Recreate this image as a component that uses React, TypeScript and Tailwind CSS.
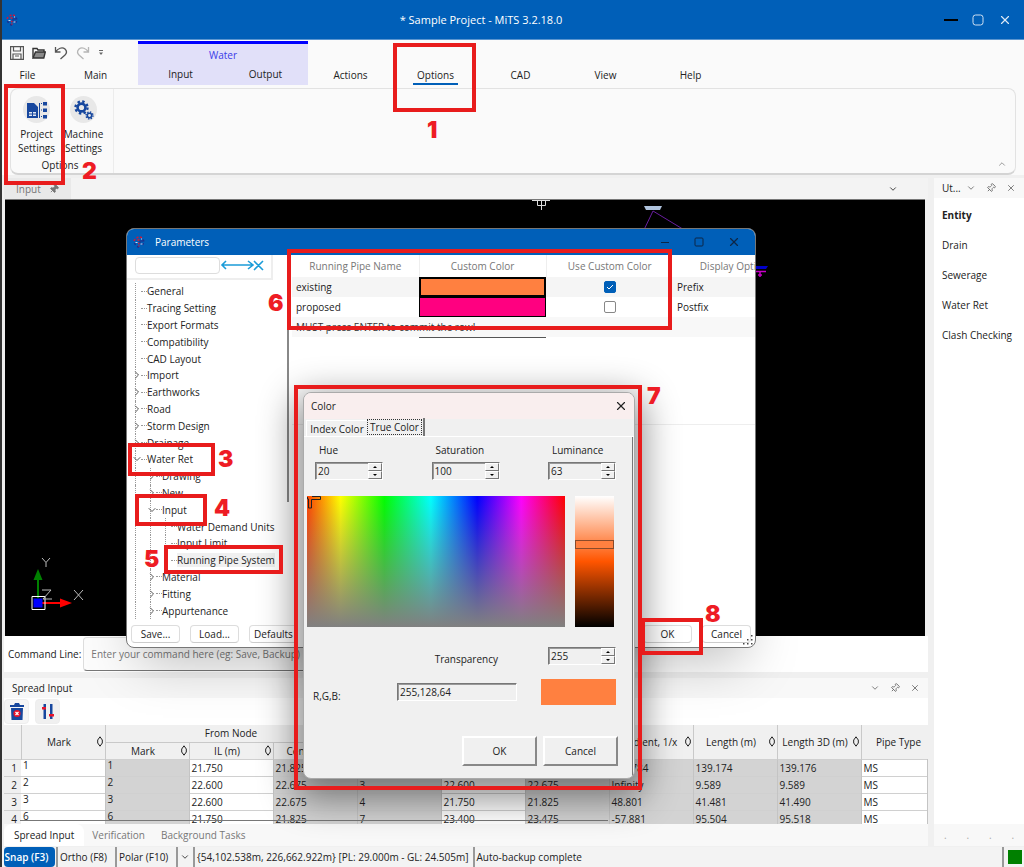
import { useState } from "react";
import { ChevronDown, ChevronRight, ChevronUp, Pin, X } from "lucide-react";
import clsx from "clsx";

const ribbonTabs = ["Actions", "Options", "CAD", "View", "Help"];

const treeItems = [
  { label: "General", depth: 0 },
  { label: "Tracing Setting", depth: 0 },
  { label: "Export Formats", depth: 0 },
  { label: "Compatibility", depth: 0 },
  { label: "CAD Layout", depth: 0 },
  { label: "Import", depth: 0, node: "closed" },
  { label: "Earthworks", depth: 0, node: "closed" },
  { label: "Road", depth: 0, node: "closed" },
  { label: "Storm Design", depth: 0, node: "closed" },
  { label: "Drainage", depth: 0, node: "closed" },
  { label: "Water Ret", depth: 0, node: "open" },
  { label: "Drawing", depth: 1, node: "closed" },
  { label: "New", depth: 1, node: "closed" },
  { label: "Input", depth: 1, node: "open" },
  { label: "Water Demand Units", depth: 2 },
  { label: "Input Limit", depth: 2 },
  { label: "Running Pipe System", depth: 2, selected: true },
  { label: "Material", depth: 1, node: "closed" },
  { label: "Fitting", depth: 1, node: "closed" },
  { label: "Appurtenance", depth: 1, node: "closed" },
];

const pipeRows = [
  ["1", "1", "21.750", "21.825", "2", "22.600", "22.675", "163.784", "139.174", "139.176", "MS"],
  ["2", "2", "22.600", "22.675", "3", "22.600", "22.675", "Infinity", "9.589", "9.589", "MS"],
  ["3", "3", "22.600", "22.675", "4", "21.750", "21.825", "48.801", "41.481", "41.490", "MS"],
  ["6", "6", "21.750", "21.825", "7", "23.400", "23.475", "-57.881", "95.504", "95.518", "MS"],
];
const editable = [0, 2, 5, 10];

const callouts = [
  { n: 1, box: "left-[393px] top-[43px] w-[83px] h-[69px]", num: "left-[427px] top-[119px]" },
  { n: 2, box: "left-[4px] top-[84px] w-[61px] h-[101px]", num: "left-[82px] top-[160px]" },
  { n: 3, box: "left-[128px] top-[443px] w-[87px] h-[33px]", num: "left-[218px] top-[448px]" },
  { n: 4, box: "left-[135px] top-[494px] w-[72px] h-[32px]", num: "left-[214px] top-[497px]" },
  { n: 5, box: "left-[164px] top-[545px] w-[119px] h-[29px]", num: "left-[144px] top-[548px]" },
  { n: 6, box: "left-[287px] top-[249px] w-[385px] h-[81px]", num: "left-[268px] top-[292px]" },
  { n: 7, box: "left-[294px] top-[385px] w-[348px] h-[405px]", num: "left-[647px] top-[385px]" },
  { n: 8, box: "left-[641px] top-[618px] w-[62px] h-[37px]", num: "left-[705px] top-[603px]" },
];

function AppLogo() {
  return (
    <svg viewBox="0 0 12 12" className="size-3" fill="none">
      <path d="M1 5l1-2M3.500 2l2-1M7 1l2 .800" stroke="#c8193c" strokeWidth="1.600" />
      <path d="M10 3.500l1 2M10.500 7l-1 2M1.500 7l1 2M4 10.500l2 .800" stroke="#1c2f8f" strokeWidth="1.500" />
      <path d="M7 4v4M9 4v2" stroke="#1c2f8f" strokeWidth="1.200" />
      <path d="M2.500 6.500h2M7.500 8h2M8 3h1" stroke="#c9d8f2" />
      <path d="M4.500 4h2M5 7.500h1.500M5.500 10h1" stroke="#e21b2c" strokeWidth="1.500" />
    </svg>
  );
}

function ProjectIcon() {
  return (
    <svg viewBox="0 0 20 18" className="h-[18px] w-5" fill="#17479e">
      <path d="M0 2h7l4 4v11H0z" />
      <path d="M2 11h3v1.500H2zM6 11h3v1.500H6zM2 13.500h3V15H2zM6 13.500h3V15H6z" fill="#dfe6f2" />
      <path d="M12 2h1v15h-1z" />
      <path d="M16 1h4v3.500h-4zM16 7.500h4V11h-4zM16 14h4v3.500h-4zM14 2h1v1h-1zM14 8.500h1v1h-1zM14 15h1v1h-1z" />
    </svg>
  );
}

function GearsIcon() {
  return (
    <svg viewBox="0 0 20 20" className="size-5" fill="none" stroke="#17479e">
      <circle cx="7.500" cy="7.500" r="3.900" strokeWidth="2.600" />
      <circle cx="7.500" cy="7.500" r="6" strokeWidth="2.400" strokeDasharray="2.4 2.312" />
      <circle cx="15.500" cy="15.500" r="2.200" strokeWidth="1.600" />
      <circle cx="15.500" cy="15.500" r="3.500" strokeWidth="1.400" strokeDasharray="1.4 1.349" />
    </svg>
  );
}

function QuickAccess() {
  return (
    <div className="flex h-[22px] items-center gap-2 pl-2 pt-1 text-[#444]">
      <button aria-label="Save">
        <svg viewBox="0 0 14 14" className="size-3.5" fill="none" stroke="#555" strokeWidth="1.200">
          <path d="M.6.600h12.800v12.800H.6zM3.500.600v4.400h7V.600M3 13.400V8h8v5.400M5 10h4" />
        </svg>
      </button>
      <button aria-label="Open">
        <svg viewBox="0 0 14 12" className="h-3 w-3.5" fill="none" stroke="#333" strokeWidth="1.400">
          <path d="M1 10.500V1.500h4l1 1.500h6v2" />
          <path d="M1 11l2.500-6H13.300l-1.500 6z" fill="#8a8a8a" />
        </svg>
      </button>
      <button aria-label="Undo">
        <svg viewBox="0 0 14 14" className="size-3.5" fill="none" stroke="#555" strokeWidth="1.300">
          <path d="M1.500 1v5h5M1.500 6C4 2.500 8 .500 11 3c2.500 2.500 1.500 4.500 0 6L6.500 13" />
        </svg>
      </button>
      <button aria-label="Redo">
        <svg viewBox="0 0 14 14" className="size-3.5" fill="none" stroke="#b5b5b5" strokeWidth="1.300">
          <path d="M12.500 1v5h-5M12.500 6C10 2.500 6 .500 3 3C.500 5.500 1.500 7.500 3 9l4.500 4" />
        </svg>
      </button>
      <button aria-label="Customize">
        <svg viewBox="0 0 6 6" className="size-1.5" fill="#666">
          <path d="M1 0h4v1H1zM1 2.500h4L3 5z" />
        </svg>
      </button>
    </div>
  );
}

function Ribbon() {
  return (
    <section className="mx-2 flex h-[87px] rounded-lg border border-b-2 border-[#e2e2e2] border-b-[#d4d4d4] bg-[#fafafa]">
      <div className="flex flex-col border-r border-[#ececec] pl-0.5 pr-1.5">
        <div className="flex leading-[14px]">
          <button className="flex w-[47px] flex-col items-center pt-[7px]">
            <span className="mb-1 flex size-[27px] items-center justify-center rounded-full bg-[#e8e8e8]">
              <ProjectIcon />
            </span>
            Project
            <br />
            Settings
          </button>
          <button className="flex w-[47px] flex-col items-center pt-[7px]">
            <span className="mb-1 flex size-[27px] items-center justify-center rounded-full bg-[#e8e8e8]">
              <GearsIcon />
            </span>
            Machine
            <br />
            Settings
          </button>
        </div>
        <span className="pt-[3px] text-center leading-[14px]">Options</span>
      </div>
      <button aria-label="Collapse ribbon" className="mb-1 ml-auto mr-2 self-end text-[#888]">
        <ChevronUp className="size-2.5" />
      </button>
    </section>
  );
}

function PanelControls() {
  return (
    <div className="flex items-center gap-2.5 text-[#666]">
      <ChevronDown className="size-2.5" />
      <Pin className="size-2.5 rotate-45" />
      <X className="size-2.5" />
    </div>
  );
}

function Drawing() {
  return (
    <div className="relative ml-px mr-[3px] min-h-96 flex-1 overflow-hidden border-t border-[#777] bg-black">
      <svg viewBox="0 0 28 12" className="absolute left-[522px] top-0 h-3 w-7" fill="none" stroke="#ddd">
        <path d="M5 .500h18M14.500 0v10M10.500 1v4.500h8V1" />
      </svg>
      <svg viewBox="0 0 50 30" className="absolute left-[631px] top-1 h-[30px] w-[50px]" fill="none">
        <path d="M8 2h18l-2 4H10z" fill="#b0c4de" />
        <path d="M17 7L6 30M17 7L50 27" stroke="#6a1fa0" />
      </svg>
      <svg viewBox="0 0 14 14" className="absolute left-[749px] top-[65px] size-3.5" fill="none">
        <path d="M0 1h14l-2 3H0z" fill="#0000d0" />
        <path d="M2 6.500h10M6 7v5M4 10h4" stroke="#d000d0" strokeWidth="1.500" />
      </svg>
      <svg viewBox="0 0 60 60" className="absolute bottom-6 left-[22px] size-[60px]" fill="none">
        <path d="M11 46V20" stroke="#008000" strokeWidth="2" />
        <path d="M11 17l-4.500 11h9z" fill="#008000" />
        <path d="M13 51h22" stroke="#f00" strokeWidth="2" />
        <path d="M45 51l-12-4.500v9z" fill="#f00" />
        <path d="M5 44.500h13v13H5z" stroke="#fff" />
        <path d="M6.500 46.500h9v9h-9z" fill="#00f" />
        <path d="M15 6l4 4.500L23 6M19 10.500V15M15 38h9l-8 9h9M47 38l9 10M56 38l-9 10" stroke="#bbb" />
      </svg>
    </div>
  );
}

function Sorter() {
  return (
    <svg viewBox="0 0 6 11" className="h-[11px] w-1.5 shrink-0" fill="none" stroke="#222">
      <path d="M3 .800L5.300 4v3L3 10.200.700 7V4z" />
    </svg>
  );
}

function HeadCell({ label }: { label: string }) {
  return (
    <div className="flex items-center whitespace-nowrap pr-0.5">
      <span className="flex-1 text-center">{label}</span>
      <Sorter />
    </div>
  );
}

function SpreadInput() {
  const head = "border-r border-[#c9c9c9] p-0 font-normal";
  return (
    <section className="flex flex-col">
      <header className="flex h-5 items-center justify-between bg-[#f8f8f8] px-2">
        <h2>Spread Input</h2>
        <PanelControls />
      </header>
      <div className="flex h-[27px] items-center gap-1.5 bg-white">
        <button aria-label="Delete row" className="flex size-[25px] items-center justify-center rounded border border-[#eee] bg-[#f5f5f5]">
          <svg viewBox="0 0 14 17" className="h-[17px] w-3.5" fill="#17479e">
            <path d="M0 2h4l1-2h4l1 2h4v2H0zM1 5h12l-.500 12h-11z" />
            <circle cx="7" cy="10.500" r="3.600" fill="#e8132b" />
            <path d="M5.500 9l3 3M8.500 9l-3 3" stroke="#fff" strokeWidth="1.200" />
          </svg>
        </button>
        <button aria-label="Adjust" className="flex size-[25px] items-center justify-center rounded border border-[#eee] bg-[#f0f0f0]">
          <svg viewBox="0 0 12 15" className="h-[15px] w-3" fill="#17479e">
            <path d="M1.500 0h2.500v15H1.500zM8 0h2.500v15H8z" />
            <path d="M0 3h4v2.500H0zM7 10h5v2.500H7z" fill="#e8132b" />
          </svg>
        </button>
      </div>
      <div className="relative h-[99px] overflow-hidden">
        <table className="w-full table-fixed border-collapse">
          <colgroup>
            <col className="w-[17px]" />
            {pipeRows[0].slice(1).map((_, i) => (
              <col key={i} className="w-[84px]" />
            ))}
            <col />
          </colgroup>
          <thead className="bg-[#f0f0f0]">
            <tr className="h-[17px]">
              <th rowSpan={2} className={head} aria-label="Row" />
              <th rowSpan={2} className={head}><HeadCell label="Mark" /></th>
              <th colSpan={3} className={clsx(head, "border-b")}>From Node</th>
              <th colSpan={3} className={clsx(head, "border-b")}>To Node</th>
              <th rowSpan={2} className={head}><HeadCell label="Gradient, 1/x" /></th>
              <th rowSpan={2} className={head}><HeadCell label="Length (m)" /></th>
              <th rowSpan={2} className={head}><HeadCell label="Length 3D (m)" /></th>
              <th rowSpan={2} className="whitespace-nowrap p-0 pl-2 font-normal">Pipe Type</th>
            </tr>
            <tr className="h-[17px]">
              <th className={head}><HeadCell label="Mark" /></th>
              <th className={head}><HeadCell label="IL (m)" /></th>
              <th className={head}><HeadCell label="Center (m)" /></th>
              <th className={head}><HeadCell label="Mark" /></th>
              <th className={head}><HeadCell label="IL (m)" /></th>
              <th className={head}><HeadCell label="Center (m)" /></th>
            </tr>
          </thead>
          <tbody>
            {pipeRows.map((row, r) => (
              <tr key={r} className="h-[17px] border-y border-[#d0d0d0] leading-[10px]">
                <th className="bg-[#f0f0f0] p-0 pr-1 text-right font-normal">{r + 1}</th>
                {row.map((value, c) => (
                  <td
                    key={c}
                    className={clsx(
                      "border-r border-[#c4c4c4] p-0 pl-0.5",
                      editable.includes(c) ? "bg-white" : "bg-[#d3d3d3]",
                      c < 2 && "align-top"
                    )}
                  >
                    {value}
                  </td>
                ))}
              </tr>
            ))}
          </tbody>
        </table>
        <div className="absolute bottom-[3px] left-4 right-80 h-px bg-[#777]" />
      </div>
      <nav className="flex h-[22px] items-center bg-[#f8f8f8] text-[#777]">
        <button className="h-full rounded-t-lg bg-white px-2.5 text-[#222]">Spread Input</button>
        <button className="px-2">Verification</button>
        <button className="px-2">Background Tasks</button>
      </nav>
    </section>
  );
}

function UtilityPanel() {
  return (
    <aside className="flex w-[90px] shrink-0 flex-col bg-white">
      <header className="flex h-5 items-center justify-between bg-[#f8f8f8] px-2">
        <span>Ut...</span>
        <PanelControls />
      </header>
      <ul className="flex-1 pl-2 pt-0.5">
        {["Entity", "Drain", "Sewerage", "Water Ret", "Clash Checking"].map((item) => (
          <li key={item} className={clsx("flex h-[30px] items-center whitespace-nowrap", item === "Entity" && "font-bold")}>
            {item}
          </li>
        ))}
      </ul>
      <div className="flex h-[22px] items-center justify-around bg-[#f8f8f8] text-[#aaa]">
        <span>.</span>
        <span>.</span>
        <span>.</span>
        <span>.</span>
      </div>
    </aside>
  );
}

function ParameterTree() {
  return (
    <ul className="relative flex h-[336px] flex-col overflow-hidden">
      {treeItems.map((item) => (
        <li
          key={item.label}
          className={clsx(
            "relative flex flex-1 items-center whitespace-nowrap",
            item.depth === 0 && "pl-1",
            item.depth === 1 && "pl-[19px]",
            item.depth === 2 && "pl-[34px]"
          )}
        >
          <span className="absolute inset-y-0 left-2 border-l border-dotted border-[#999]" />
          {item.depth > 0 && <span className="absolute inset-y-0 left-[23px] border-l border-dotted border-[#999]" />}
          {item.depth > 1 && <span className="absolute inset-y-0 left-[38px] border-l border-dotted border-[#999]" />}
          <span className="relative w-2.5 shrink-0 text-[#555]">
            {item.node === "closed" && <ChevronRight className="size-3" />}
            {item.node === "open" && <ChevronDown className="size-3" />}
          </span>
          <span className="w-1.5 shrink-0 border-t border-dotted border-[#999]" />
          <span className={clsx(item.selected && "bg-[#f0f0f0]")}>{item.label}</span>
        </li>
      ))}
    </ul>
  );
}

function ParametersDialog() {
  const [custom, setCustom] = useState([true, false]);
  const button = "h-[18px] rounded border border-[#ddd] border-b-[#ccc] bg-white";
  const rows = [
    { name: "existing", swatch: "bg-[#ff8040] border-2", option: "Prefix" },
    { name: "proposed", swatch: "bg-[#ff0080] border", option: "Postfix" },
  ];

  return (
    <div role="dialog" aria-label="Parameters" className="absolute left-[124px] top-[228px] flex h-[420px] w-[630px] flex-col overflow-hidden rounded-lg border border-[#777] bg-white shadow-2xl">
      <header className="flex h-[26px] shrink-0 items-center bg-[#005fb8] pl-1.5 pr-3.5 text-white">
        <AppLogo />
        <h2 className="flex-1 pl-2.5">Parameters</h2>
        <div className="flex items-center gap-[22px] text-[#0d2747]">
          <svg viewBox="0 0 12 12" className="size-3" stroke="currentColor"><path d="M2 6.500h8" /></svg>
          <svg viewBox="0 0 12 12" className="size-3" stroke="currentColor" fill="none"><rect x="2" y="2" width="8" height="8" rx="1" /></svg>
          <X className="size-3.5" />
        </div>
      </header>
      <div className="flex min-h-0 flex-1">
        <div className="flex w-[162px] shrink-0 flex-col">
          <div className="flex h-[25px] w-[146px] items-start border-b-2 border-r-2 border-[#eee] pl-2 pt-0.5">
            <input aria-label="Search parameters" className="h-[17px] w-[85px] rounded border border-[#ddd] bg-white" />
            <svg viewBox="0 0 46 12" className="mt-0.5 h-3 w-[46px]" fill="none" stroke="#1b9cd8" strokeWidth="1.600">
              <path d="M2 6h31M6 2L2 6l4 4M28 2l5 4-5 4M34 2l9 9M43 2l-9 9" />
            </svg>
          </div>
          <div className="flex">
            <div className="flex-1 pt-[3px]"><ParameterTree /></div>
            <div className="mt-3 h-[210px] w-0.5 bg-[#888]" />
          </div>
        </div>
        <div className="min-w-0 flex-1 overflow-hidden pl-[3px]">
          <table className="w-[508px] table-fixed border-collapse">
            <thead className="text-[#777]">
              <tr className="h-[22px]">
                <th className="border-r border-[#eee] p-0 font-normal">Running Pipe Name</th>
                <th className="border-r border-[#eee] p-0 font-normal">Custom Color</th>
                <th className="p-0 font-normal">Use Custom Color</th>
                <th className="p-0 font-normal">Display Options</th>
              </tr>
            </thead>
            <tbody>
              {rows.map((row, i) => (
                <tr key={row.name} className={clsx("h-5", i === 0 && "bg-[#f5f5f5]")}>
                  <td className="p-0 pl-1">{row.name}</td>
                  <td className="p-0"><div className={clsx("h-5 border-black", row.swatch)} /></td>
                  <td className="p-0">
                    <label className="flex justify-center">
                      <input
                        type="checkbox"
                        aria-label={"Use custom color for " + row.name}
                        checked={custom[i]}
                        onChange={() => setCustom(custom.map((v, k) => (k === i ? !v : v)))}
                        className="peer sr-only"
                      />
                      <span className="flex size-3 items-center justify-center rounded-xs border border-[#888] bg-white peer-checked:border-[#005fb8] peer-checked:bg-[#005fb8]">
                        <svg viewBox="0 0 8 8" className="size-2" fill="none" stroke="#fff"><path d="M1 4l2 2 4-4" /></svg>
                      </span>
                    </label>
                  </td>
                  <td className="p-0 pl-1">{row.option}</td>
                </tr>
              ))}
              <tr className="h-5 bg-[#f8f8f8]">
                <td colSpan={4} className="p-0 pl-1 text-[#333]">MUST press ENTER to commit the row!</td>
              </tr>
            </tbody>
          </table>
          <div className="ml-[127px] h-px w-[127px] bg-[#555]" />
          <div className="mt-[86px] border-t border-[#eee]" />
        </div>
      </div>
      <footer className="flex h-[27px] shrink-0 items-center gap-2.5 px-1">
        <button className={clsx(button, "w-[49px]")}>Save...</button>
        <button className={clsx(button, "w-[49px]")}>Load...</button>
        <button className={clsx(button, "w-[49px]")}>Defaults</button>
        <button className={clsx(button, "ml-auto w-[49px]")}>OK</button>
        <button className={clsx(button, "w-[49px]")}>Cancel</button>
      </footer>
      <svg viewBox="0 0 10 10" className="absolute bottom-0.5 right-0.5 size-2.5" fill="#444">
        <path d="M8 0h1.500v1.500H8zM4 4h1.500v1.500H4zM8 4h1.500v1.500H8zM0 8h1.500v1.500H0zM4 8h1.500v1.500H4zM8 8h1.500v1.500H8z" />
      </svg>
    </div>
  );
}

function Spinner({ label, value, side }: { label: string; value: string; side?: boolean }) {
  const [text, setText] = useState(value);
  return (
    <label className={clsx("flex", side ? "items-center gap-[46px]" : "flex-col gap-1")}>
      <span className={clsx("px-1 leading-4", side && "pt-1.5")}>{label}</span>
      <span className="flex h-[18px] w-[68px] border border-[#fff] border-l-[#777] border-t-[#777] bg-[#f0f0f0] shadow-[inset_1px_1px_0_#999]">
        <input value={text} onChange={(e) => setText(e.target.value)} className="w-0 flex-1 bg-transparent pl-0.5" />
        <span className="flex w-3.5 flex-col bg-[#f0f0f0]">
          <span className="flex flex-1 items-center justify-center border border-white border-b-[#777] border-r-[#777]">
            <svg viewBox="0 0 4 2" className="h-0.5 w-1"><path d="M0 2l2-2 2 2z" /></svg>
          </span>
          <span className="flex flex-1 items-center justify-center border border-white border-b-[#777] border-r-[#777]">
            <svg viewBox="0 0 4 2" className="h-0.5 w-1"><path d="M0 0h4L2 2z" /></svg>
          </span>
        </span>
      </span>
    </label>
  );
}

function ColorDialog() {
  const button = "h-[30px] w-[75px] border-2 border-white border-b-[#888] border-r-[#888] bg-[#f0f0f0]";
  return (
    <div role="dialog" aria-label="Color" className="absolute left-[301px] top-[392px] flex h-[387px] w-[332px] flex-col overflow-hidden rounded-lg border border-[#aaa] bg-[#f0f0f0] shadow-[0_12px_36px_8px_rgba(0,0,0,0.45)]">
      <header className="flex h-[26px] items-center justify-between bg-[#f9eeee] pl-[7px] pr-1.5">
        <h2>Color</h2>
        <button aria-label="Close"><X className="size-3.5" /></button>
      </header>
      <div className="flex h-[18px] items-end border-b border-white pl-0.5">
        <button className="h-4 w-[61px] border-l border-t border-white">Index Color</button>
        <button className="h-[18px] w-[58px] border-r-2 border-[#777] pr-px">
          <span className="block border border-dotted border-[#333] leading-[14px]">True Color</span>
        </button>
      </div>
      <div className="mr-px flex flex-1 flex-col border-r border-[#777] pl-[3px] pr-4">
        <div className="flex justify-between pl-2 pt-[5px]">
          <Spinner label="Hue" value="20" />
          <Spinner label="Saturation" value="100" />
          <Spinner label="Luminance" value="63" />
        </div>
        <div className="mt-4 flex h-[131px] gap-2.5">
          <div className="relative w-[258px] bg-[linear-gradient(to_bottom,rgba(128,128,128,0),rgb(128,128,128)),linear-gradient(to_right,#ff4000,#ffff00_13%,#00ff00_30%,#00ffff_48%,#0000ff_66%,#ff00ff_83%,#ff0000)]">
            <svg viewBox="0 0 14 13" className="absolute left-0 top-0 h-[13px] w-3.5" fill="none" stroke="#222">
              <path d="M.500 1v2h1v9h3V3.500h9v-3H5" />
            </svg>
          </div>
          <div className="relative w-[39px] bg-[linear-gradient(to_bottom,#fff,#ff5500_50%,#000)]">
            <div className="absolute inset-x-0 top-11 h-[9px] border border-[#8a4a2a] bg-[#ff8040]" />
          </div>
        </div>
        <div className="mt-[18px] flex justify-end"><Spinner label="Transparency" value="255" side /></div>
        <div className="mt-3 flex items-center">
          <label htmlFor="rgb" className="w-[90px] pl-1.5 pt-2">R,G,B:</label>
          <input
            id="rgb"
            defaultValue="255,128,64"
            className="h-[18px] w-[120px] border border-[#fff] border-l-[#777] border-t-[#777] pl-0.5 shadow-[inset_1px_1px_0_#999]"
          />
          <div className="ml-auto h-[26px] w-[75px] bg-[#ff8040]" />
        </div>
        <div className="-mr-0.5 mb-3 mt-auto flex justify-end gap-1.5">
          <button className={button}>OK</button>
          <button className={button}>Cancel</button>
        </div>
      </div>
    </div>
  );
}

function StatusBar() {
  const cell = "flex items-center border-l-2 border-[#999] pl-0.5";
  return (
    <footer className="flex h-5 items-stretch whitespace-nowrap bg-[#f3f3f3] pl-0.5">
      <button className="mr-px w-[51px] rounded bg-[#005fb8] pr-1.5 font-semibold text-white">Snap (F3)</button>
      <button className={clsx(cell, "w-[59px]")}>Ortho (F8)</button>
      <button className={clsx(cell, "w-[61px]")}>Polar (F10)</button>
      <button aria-label="More" className={clsx(cell, "w-[17px]")}><ChevronDown className="size-2.5" /></button>
      <span className={clsx(cell, "pr-1")}>{"{54,102.538m, 226,662.922m} [PL: 29.000m - GL: 24.505m]"}</span>
      <span className={cell}>Auto-backup complete</span>
      <span className={clsx(cell, "ml-auto pl-1 pr-0.5")}><span className="size-3.5 bg-[#008000]" /></span>
    </footer>
  );
}

export default function App() {
  return (
    <div className="relative flex min-h-screen flex-col overflow-hidden border-l-2 border-[#333] bg-[#f0f0f0] font-['Open_Sans',sans-serif] text-[10px] leading-[14px] text-[#222]">
      <header className="flex h-10 items-center border-b border-[#5a95cf] bg-[#005fb8] pl-1 pr-1.5 text-white">
        <AppLogo />
        <h1 className="flex-1 text-center text-[11px]">* Sample Project - MiTS 3.2.18.0</h1>
        <div className="flex items-center gap-3.5 pr-1.5">
          <svg viewBox="0 0 14 12" className="h-3 w-3.5" stroke="#000" strokeWidth="2"><path d="M0 6h14" /></svg>
          <svg viewBox="0 0 12 12" className="size-3" fill="none" stroke="#cfe0f2"><rect x="1" y="1" width="10" height="10" rx="2.500" /></svg>
          <X className="size-3.5 text-[#dce8f5]" />
        </div>
      </header>

      <div className="bg-[#fafafa]">
        <nav className="flex h-12 pb-[3px]">
          <div className="w-[136px]">
            <QuickAccess />
            <div className="flex h-[26px] items-center">
              <button className="w-[51px]">File</button>
              <button className="w-[85px]">Main</button>
            </div>
          </div>
          <div className="mt-px w-[170px] border-t-[3px] border-[#0000ff] bg-[#e1e0f9]">
            <div className="h-[19px] pt-1 text-center text-[#3a3ae8]">Water</div>
            <div className="flex h-[22px] items-center">
              <button className="w-1/2">Input</button>
              <button className="w-1/2">Output</button>
            </div>
          </div>
          {ribbonTabs.map((tab) => (
            <button key={tab} className="mt-auto h-[18px] w-[85px]">
              <span className={clsx("inline-block h-[17px] px-1", tab === "Options" && "border-b-2 border-[#005fb8]")}>{tab}</span>
            </button>
          ))}
        </nav>
        <Ribbon />
      </div>

      <main className="flex flex-1 gap-1.5 pt-[3px]">
        <div className="flex min-w-0 flex-1 flex-col pl-0.5">
          <div className="flex h-[21px] items-center justify-between bg-[#f3f3f3] pr-[30px]">
            <button className="flex h-full items-center gap-2 bg-[#e9e9e9] px-3 text-[#777]">
              Input
              <Pin className="size-2.5 rotate-45 fill-current" />
            </button>
            <ChevronDown className="size-2.5" />
          </div>
          <Drawing />
          <div className="mb-1.5 flex h-9 items-center gap-0.5 bg-white pl-1">
            <label htmlFor="command">Command Line:</label>
            <input
              id="command"
              placeholder="Enter your command here (eg: Save, Backup)"
              className="h-[34px] w-[540px] rounded border border-[#ddd] border-b-[#777] bg-[#fcfcfc] px-[7px] placeholder:text-[#777]"
            />
          </div>
          <SpreadInput />
        </div>
        <UtilityPanel />
      </main>
      <div className="h-px" />
      <StatusBar />

      <ParametersDialog />
      <ColorDialog />

      {callouts.map((c) => (
        <div key={c.n} className="pointer-events-none absolute -left-0.5 top-0 font-['Inter',sans-serif] text-[23px] font-black leading-[23px] text-[#ee1c24]">
          <div className={clsx("absolute border-4 border-[#e81c1c]", c.box)} />
          <span className={clsx("absolute", c.num)}>{c.n}</span>
        </div>
      ))}
    </div>
  );
}
